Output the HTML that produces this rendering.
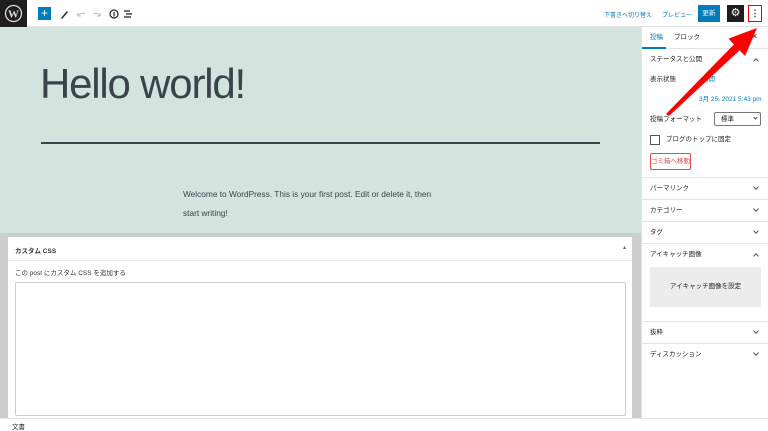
<!DOCTYPE html>
<html><head><meta charset="utf-8"><style>
*{box-sizing:border-box;margin:0;padding:0}
body{width:768px;height:430px;overflow:hidden;background:#fff;font-family:"Liberation Sans","Noto Sans CJK JP",sans-serif;position:relative;color:#1e1e1e}
.a{position:absolute;white-space:nowrap}
.top{left:0;top:0;width:768px;height:27px;background:#fff;border-bottom:1px solid #e2e4e7}
.wp{left:0;top:0;width:27px;height:27px;background:#1e1e1e}
.canvas{left:0;top:27px;width:641px;height:206px;background:#d2e4dd}
.grey{left:0;top:233px;width:641px;height:185px;background:#cdcdcd}
.panel{left:8px;top:237px;width:624px;height:181px;background:#fff}
.side{left:641px;top:27px;width:127px;height:391px;background:#fff;border-left:1px solid #e2e4e7}
.row{position:absolute;left:0;width:127px;border-bottom:1px solid #e2e4e7;font-size:6.5px;color:#1e1e1e;line-height:8px}
.row span{position:absolute;left:8px;white-space:nowrap}
.chev{position:absolute;right:11px;width:4px;height:4px;border-right:1px solid #555;border-bottom:1px solid #555;transform:rotate(45deg)}
.up{transform:rotate(-135deg)}
.t7{font-size:6.5px}
</style></head><body>
<div class="a top"></div>
<div class="a wp"><svg width="27" height="27"><circle cx="13.5" cy="13.5" r="8" fill="none" stroke="#ddd" stroke-width="1.3"/><text x="13.5" y="17.5" font-size="11" font-family="Liberation Serif" font-weight="bold" fill="#ddd" text-anchor="middle">W</text></svg></div>
<div class="a" style="left:38px;top:7px;width:13px;height:13px;background:#007cba;color:#fff;font-size:12px;line-height:12px;text-align:center">+</div>
<svg class="a" style="left:58px;top:7px" width="80" height="14"><path d="M3 11 L9 4 L10 5 L4 12Z" fill="#1e1e1e"/><path d="M20 9 Q22 5 27 7 M20 9 L19 6 M20 9 L23 9" stroke="#bbb" fill="none"/><path d="M42 9 Q40 5 35 7 M42 9 L43 6 M42 9 L39 9" stroke="#bbb" fill="none"/><circle cx="56" cy="7" r="4" fill="none" stroke="#1e1e1e" stroke-width="1.2"/><rect x="55.5" y="5" width="1.2" height="4.5" fill="#1e1e1e"/><path d="M66 4h6M68 7h6M66 10h7" stroke="#1e1e1e" stroke-width="1.2"/></svg>
<div class="a t7" style="left:604px;top:10px;color:#007cba;font-size:6px">下書きへ切り替え</div>
<div class="a t7" style="left:662px;top:10px;color:#007cba;font-size:6px">プレビュー</div>
<div class="a" style="left:698px;top:5px;width:22px;height:17px;background:#007cba;color:#fff;font-size:6.5px;text-align:center;line-height:17px">更新</div>
<div class="a" style="left:727px;top:5px;width:17px;height:17px;background:#1e1e1e;color:#fff;font-size:11px;text-align:center;line-height:17px">⚙</div>
<div class="a" style="left:748px;top:5px;width:14px;height:17px;border:1px solid #e00;color:#333;font-size:9px;text-align:center;line-height:15px;font-weight:bold">⋮</div>
<div class="a canvas"></div>
<div class="a" style="left:40px;top:60px;font-size:42px;color:#3a434a;font-weight:300;letter-spacing:-1.2px">Hello world!</div>
<div class="a" style="left:41px;top:142px;width:559px;height:2px;background:#3a434a"></div>
<div class="a" style="left:183px;top:185px;font-size:8.3px;color:#3a434a;line-height:19px;width:262px;white-space:normal">Welcome to WordPress. This is your first post. Edit or delete it, then start writing!</div>
<div class="a grey"></div>
<div class="a panel">
 <div class="a" style="left:0;top:0;width:624px;height:24px;border-bottom:1px solid #e2e4e7"></div>
 <div class="a t7" style="left:7px;top:8px;font-weight:bold;color:#333">カスタム CSS</div>
 <div class="a" style="right:6px;top:7px;font-size:6px;color:#666">▴</div>
 <div class="a" style="left:7px;top:30px;font-size:6.5px;color:#333">この post にカスタム CSS を追加する</div>
 <div class="a" style="left:7px;top:45px;width:611px;height:134px;border:1px solid #ccc;border-radius:2px"></div>
</div>
<div class="a" style="left:0;top:418px;width:768px;height:12px;background:#fff;border-top:1px solid #e2e4e7"></div>
<div class="a" style="left:12px;top:421px;font-size:6.5px;color:#333">文書</div>
<div class="a side">
 <div class="row" style="top:0;height:22px"><span style="top:7px;color:#007cba">投稿</span><span style="left:32px;top:7px">ブロック</span><span style="left:110px;top:5px;font-size:9px">×</span></div>
 <div class="a" style="left:0;top:20px;width:24px;height:2px;background:#007cba"></div>
 <div class="row" style="top:22px;height:129px">
  <span style="top:7px">ステータスと公開</span><i class="chev up" style="top:10px"></i>
  <span style="top:27px">表示状態</span><span style="left:60px;top:27px;color:#007cba">公開</span>
  <span style="left:57px;top:47px;color:#007cba">3月 25, 2021 5:43 pm</span>
  <span style="top:67px">投稿フォーマット</span>
  <div class="a" style="left:72px;top:63px;width:47px;height:14px;border:1px solid #777;border-radius:2px;font-size:6.5px;padding:3px 6px;line-height:7px">標準</div>
  <i class="chev" style="top:67px;right:12px;width:3px;height:3px"></i>
  <div class="a" style="left:8px;top:86px;width:10px;height:10px;border:1px solid #555"></div>
  <span style="left:24px;top:87px">ブログのトップに固定</span>
  <div class="a" style="left:8px;top:104px;width:41px;height:17px;border:1px solid #d94f4f;border-radius:2px;color:#d94f4f;font-size:6.5px;text-align:center;line-height:15px">ゴミ箱へ移動</div>
 </div>
 <div class="row" style="top:151px;height:22px"><span style="top:7px">パーマリンク</span><i class="chev" style="top:7px"></i></div>
 <div class="row" style="top:173px;height:22px"><span style="top:7px">カテゴリー</span><i class="chev" style="top:7px"></i></div>
 <div class="row" style="top:195px;height:22px"><span style="top:7px">タグ</span><i class="chev" style="top:7px"></i></div>
 <div class="row" style="top:217px;height:78px"><span style="top:7px">アイキャッチ画像</span><i class="chev up" style="top:10px"></i>
  <div class="a" style="left:8px;top:23px;width:111px;height:40px;background:#ececec;font-size:6.5px;text-align:center;line-height:40px">アイキャッチ画像を設定</div></div>
 <div class="row" style="top:295px;height:22px"><span style="top:7px">抜粋</span><i class="chev" style="top:7px"></i></div>
 <div class="row" style="top:317px;height:22px;border-bottom:none"><span style="top:7px">ディスカッション</span><i class="chev" style="top:7px"></i></div>
</div>
<svg class="a" style="left:0;top:0" width="768" height="430"><path d="M666 114 L734 44.4 L728.5 38.6 L757 28 L745.1 56 L739.6 50.2 L669 116Z" fill="#f00"/></svg>
</body></html>
